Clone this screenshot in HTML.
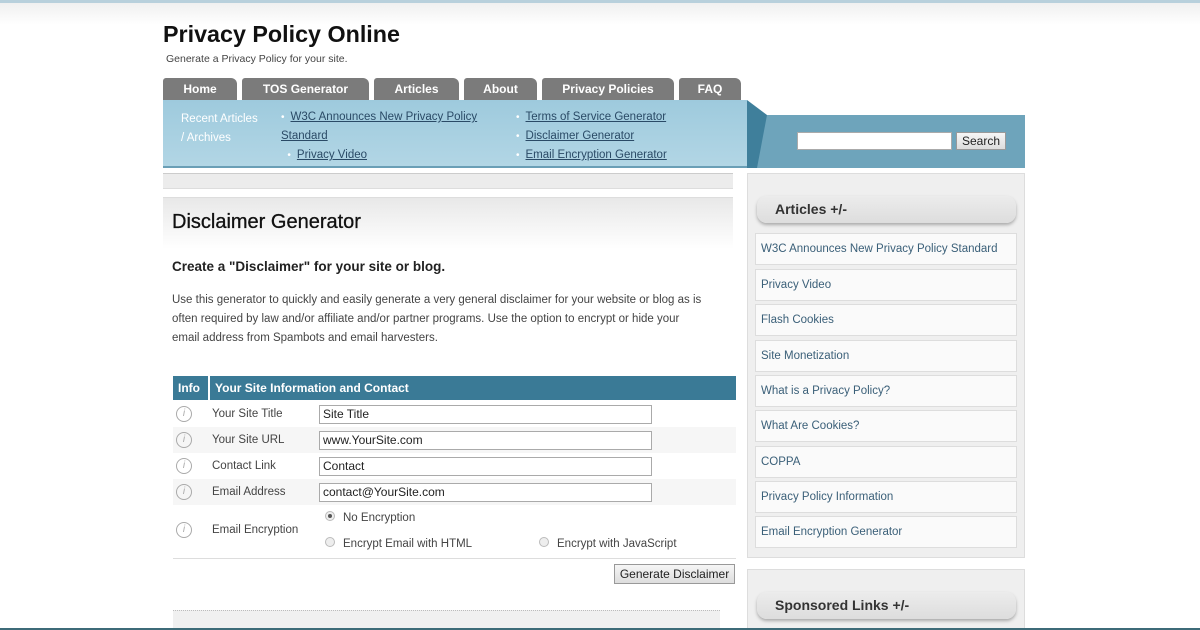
<!DOCTYPE html>
<html><head><meta charset="utf-8"><style>
*{margin:0;padding:0;box-sizing:border-box}
body{width:1200px;height:630px;overflow:hidden;background:#fff;font-family:"Liberation Sans",sans-serif;position:relative;color:#333}
.a{position:absolute}
.tab{position:absolute;top:78px;height:22px;background:#7b7b7b;color:#fff;font-weight:bold;font-size:12px;text-align:center;line-height:22px;border-radius:3px 6px 0 0}
.sub a{color:#2a4a66;text-decoration:underline}
.dot{color:#fff;font-size:10px;margin-right:6px}
.sub{font-size:11.5px;color:#2a4a66;line-height:19px}
.item{position:absolute;left:755px;width:262px;height:32px;background:#fafafa;border:1px solid #ddd;font-size:11.5px;line-height:30px;padding-left:5px;color:#3a5f78}
.row{position:absolute;left:173px;width:563px;height:26px;font-size:11.5px;color:#444}
.row .ic{position:absolute;left:3px;top:5px;width:16px;height:16px;border:1.5px solid #aaa;border-radius:50%;color:#aaa;font-size:10px;text-align:center;line-height:13px;font-style:italic}
.row .lb{position:absolute;left:39px;top:7px}
.row .in{position:absolute;left:146px;top:4px;width:333px;height:19px;border:1px solid #aaa;background:#fff;font-size:12px;padding-left:3px;line-height:17px;color:#222}
.rad{position:absolute;width:10px;height:10px;border-radius:50%;border:1px solid #bbb;background:#eee}
</style></head><body>
<div class="a" style="left:0;top:0;width:1200px;height:3px;background:#b8d0dc"></div>
<div class="a" style="left:0;top:3px;width:1200px;height:22px;background:linear-gradient(#f0f0f0,#fff)"></div>
<div class="a" style="left:163px;top:21px;font-size:23.3px;font-weight:bold;color:#111">Privacy Policy Online</div>
<div class="a" style="left:166px;top:53px;font-size:10.5px;color:#444">Generate a Privacy Policy for your site.</div>

<div class="tab" style="left:163px;width:74px">Home</div>
<div class="tab" style="left:242px;width:127px">TOS Generator</div>
<div class="tab" style="left:374px;width:85px">Articles</div>
<div class="tab" style="left:464px;width:73px">About</div>
<div class="tab" style="left:542px;width:132px">Privacy Policies</div>
<div class="tab" style="left:679px;width:62px">FAQ</div>

<div class="a" style="left:163px;top:100px;width:584px;height:68px;background:linear-gradient(#9ecadd,#b2d6e5);border-bottom:2px solid #6a9fb6"></div>
<div class="a" style="left:747px;top:115px;width:278px;height:53px;background:#6ea4bb"></div>
<svg class="a" style="left:747px;top:100px" width="22" height="68"><polygon points="0,0 20,15 10,68 0,68" fill="#3f7f9b"/></svg>
<div class="a" style="left:797px;top:132px;width:155px;height:18px;background:#fff;border:1px solid #aaa"></div>
<div class="a" style="left:956px;top:132px;width:50px;height:18px;background:linear-gradient(#f6f6f6,#ddd);border:1px solid #999;font-size:12px;text-align:center;line-height:16px;color:#222">Search</div>

<div class="a sub" style="left:181px;top:110px;color:#fff">Recent Articles<br>/ Archives</div>
<div class="a sub" style="left:281px;top:108px"><span class="dot">•</span><a>W3C Announces New Privacy Policy</a><br><a>Standard</a><br>&nbsp;&nbsp;<span class="dot">•</span><a>Privacy Video</a></div>
<div class="a sub" style="left:516px;top:108px"><span class="dot">•</span><a>Terms of Service Generator</a><br><span class="dot">•</span><a>Disclaimer Generator</a><br><span class="dot">•</span><a>Email Encryption Generator</a></div>

<div class="a" style="left:163px;top:173px;width:570px;height:16px;background:#ececec;border-top:1px solid #ccc;border-bottom:1px solid #ddd"></div>
<div class="a" style="left:163px;top:197px;width:570px;height:52px;background:linear-gradient(#e8e8e8,#fff);border-top:1px solid #ddd"></div>
<div class="a" style="left:172px;top:211px;font-size:20px;color:#111;-webkit-text-stroke:0.3px #111">Disclaimer Generator</div>
<div class="a" style="left:172px;top:259px;font-size:13.5px;font-weight:bold;color:#222">Create a "Disclaimer" for your site or blog.</div>
<div class="a" style="left:172px;top:291px;font-size:11.5px;line-height:19px;color:#444;white-space:nowrap">Use this generator to quickly and easily generate a very general disclaimer for your website or blog as is<br>often required by law and/or affiliate and/or partner programs. Use the option to encrypt or hide your<br>email address from Spambots and email harvesters.</div>

<div class="a" style="left:173px;top:376px;width:563px;height:24px;background:#3a7a96"></div>
<div class="a" style="left:208px;top:376px;width:2px;height:24px;background:#fff"></div>
<div class="a" style="left:178px;top:381px;font-size:12px;font-weight:bold;color:#fff">Info</div>
<div class="a" style="left:215px;top:381px;font-size:12px;font-weight:bold;color:#fff">Your Site Information and Contact</div>

<div class="row" style="top:401px"><div class="ic">i</div><div class="lb">Your Site Title</div><div class="in">Site Title</div></div>
<div class="row" style="top:427px;background:#f6f6f6"><div class="ic">i</div><div class="lb">Your Site URL</div><div class="in">www.YourSite.com</div></div>
<div class="row" style="top:453px"><div class="ic">i</div><div class="lb">Contact Link</div><div class="in">Contact</div></div>
<div class="row" style="top:479px;background:#f6f6f6"><div class="ic">i</div><div class="lb">Email Address</div><div class="in">contact@YourSite.com</div></div>
<div class="row" style="top:505px;height:52px"><div class="ic" style="top:17px">i</div><div class="lb" style="top:19px">Email Encryption</div></div>
<div class="rad" style="left:325px;top:511px"><div style="width:4px;height:4px;background:#555;border-radius:50%;margin:2px"></div></div>
<div class="a" style="left:343px;top:512px;font-size:11.5px;color:#444">No Encryption</div>
<div class="rad" style="left:325px;top:537px"></div>
<div class="a" style="left:343px;top:538px;font-size:11.5px;color:#444">Encrypt Email with HTML</div>
<div class="rad" style="left:539px;top:537px"></div>
<div class="a" style="left:557px;top:538px;font-size:11.5px;color:#444">Encrypt with JavaScript</div>
<div class="a" style="left:173px;top:558px;width:563px;height:1px;background:#ddd"></div>
<div class="a" style="left:614px;top:564px;width:121px;height:20px;background:linear-gradient(#f6f6f6,#ddd);border:1px solid #999;font-size:12px;text-align:center;line-height:18px;color:#222">Generate Disclaimer</div>
<div class="a" style="left:173px;top:610px;width:547px;height:18px;background:#f0f0f0;border-top:1px dotted #bbb"></div>

<div class="a" style="left:747px;top:173px;width:278px;height:385px;background:#efefef;border:1px solid #ddd"></div>
<div class="a" style="left:757px;top:196px;width:259px;height:27px;background:linear-gradient(#ececec,#ddd);border-radius:10px;box-shadow:0 2px 3px #aaa"></div>
<div class="a" style="left:775px;top:201px;font-size:14px;font-weight:bold;color:#333">Articles +/-</div>
<div class="item" style="top:233px">W3C Announces New Privacy Policy Standard</div>
<div class="item" style="top:269px">Privacy Video</div>
<div class="item" style="top:304px">Flash Cookies</div>
<div class="item" style="top:340px">Site Monetization</div>
<div class="item" style="top:375px">What is a Privacy Policy?</div>
<div class="item" style="top:410px">What Are Cookies?</div>
<div class="item" style="top:446px">COPPA</div>
<div class="item" style="top:481px">Privacy Policy Information</div>
<div class="item" style="top:516px">Email Encryption Generator</div>

<div class="a" style="left:747px;top:569px;width:278px;height:61px;background:#efefef;border:1px solid #ddd"></div>
<div class="a" style="left:757px;top:592px;width:259px;height:27px;background:linear-gradient(#ececec,#ddd);border-radius:10px;box-shadow:0 2px 3px #aaa"></div>
<div class="a" style="left:775px;top:597px;font-size:14px;font-weight:bold;color:#333">Sponsored Links +/-</div>
<div class="a" style="left:0;top:628px;width:1200px;height:2px;background:#3d6b78"></div>
</body></html>
